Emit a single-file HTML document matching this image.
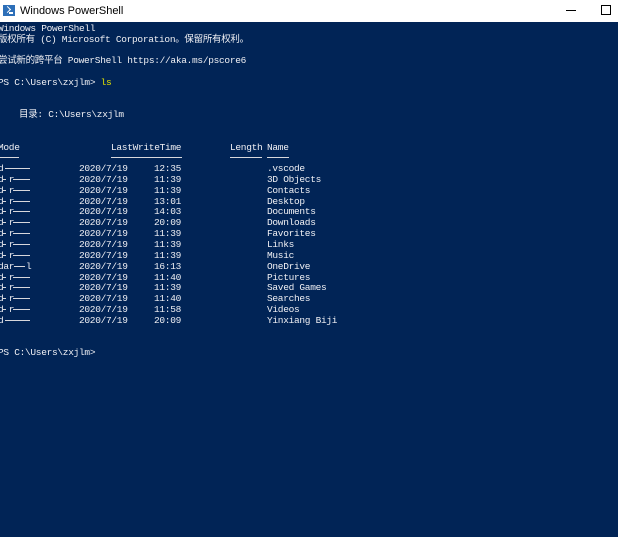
<!DOCTYPE html>
<html><head><meta charset="utf-8"><style>
html,body{margin:0;padding:0;width:618px;height:537px;overflow:hidden;background:#012456;}
#tb{position:absolute;left:0;top:0;width:618px;height:22px;background:#fff;}
#tb .t{position:absolute;left:20px;top:5px;font:11px "Liberation Sans",sans-serif;color:#000;}
#ic{position:absolute;left:3px;top:5px;width:12px;height:11px;background:#2d6fb8;}
#ic:before{content:"";position:absolute;left:2px;top:2px;width:4px;height:4px;border-right:1.5px solid #fff;border-bottom:1.5px solid #fff;transform:rotate(-45deg);}
#ic:after{content:"";position:absolute;left:6px;top:7px;width:4px;height:1.5px;background:#fff;}
#min{position:absolute;left:566px;top:10px;width:10px;height:1px;background:#000;}
#max{position:absolute;left:601px;top:5px;width:8px;height:8px;border:1px solid #000;}
.l{position:absolute;white-space:pre;font:9.5px "Liberation Mono","Noto Sans CJK SC",monospace;color:#f0f0f4;line-height:11px;letter-spacing:-0.3px;}
.u{position:absolute;height:1px;background:#d8d8dc;}
.m{position:absolute;height:1px;background:#d8d8dc;}
</style></head><body>
<div id="tb"><div id="ic"></div><div class="t">Windows PowerShell</div><div id="min"></div><div id="max"></div></div>
<div class="l" style="left:-2px;top:23px">Windows PowerShell</div>
<div class="l" style="left:-2px;top:34px">版权所有 (C) Microsoft Corporation。保留所有权利。</div>
<div class="l" style="left:-2px;top:55px">尝试新的跨平台 PowerShell https://aka.ms/pscore6</div>
<div class="l" style="left:-2px;top:77px">PS C:\Users\zxjlm&gt; <span style="color:#e0e000">ls</span></div>
<div class="l" style="left:19px;top:109px">目录: C:\Users\zxjlm</div>
<div class="l" style="left:-2px;top:142px">Mode</div>
<div class="l" style="left:111px;top:142px">LastWriteTime</div>
<div class="l" style="left:230px;top:142px">Length</div>
<div class="l" style="left:267px;top:142px">Name</div>
<div class="u" style="left:0;top:157px;width:19px"></div>
<div class="u" style="left:111px;top:157px;width:71px"></div>
<div class="u" style="left:230px;top:157px;width:32px"></div>
<div class="u" style="left:267px;top:157px;width:22px"></div>
<div id="rows"></div>
<div class="l" style="left:-2px;top:347px">PS C:\Users\zxjlm&gt;</div>
<script>
var d=[["d","12:35",".vscode"],["d-r","11:39","3D Objects"],["d-r","11:39","Contacts"],["d-r","13:01","Desktop"],["d-r","14:03","Documents"],["d-r","20:09","Downloads"],["d-r","11:39","Favorites"],["d-r","11:39","Links"],["d-r","11:39","Music"],["dar","16:13","OneDrive"],["d-r","11:40","Pictures"],["d-r","11:39","Saved Games"],["d-r","11:40","Searches"],["d-r","11:58","Videos"],["d","20:09","Yinxiang Biji"]];
var h="";
for(var i=0;i<d.length;i++){var y=163+i*10.86;var m=d[i][0];
var txt=m=="d"?"d":(m=="dar"?"dar":"d r");
var lx=m=="d"?5:(m=="dar"?14:13);var lw=m=="dar"?11:(30-lx);
h+='<div class="l" style="left:-2px;top:'+y+'px">'+txt+'</div>';
if(m=="d-r")h+='<div class="m" style="left:3px;top:'+(y+5)+'px;width:3px"></div>';
h+='<div class="m" style="left:'+lx+'px;top:'+(y+5)+'px;width:'+lw+'px"></div>';
if(m=="dar")h+='<div class="l" style="left:26px;top:'+y+'px">l</div>';
h+='<div class="l" style="left:79px;top:'+y+'px">2020/7/19</div>';
h+='<div class="l" style="left:154px;top:'+y+'px">'+d[i][1]+'</div>';
h+='<div class="l" style="left:267px;top:'+y+'px">'+d[i][2]+'</div>';}
document.getElementById("rows").innerHTML=h;
</script>
</body></html>
